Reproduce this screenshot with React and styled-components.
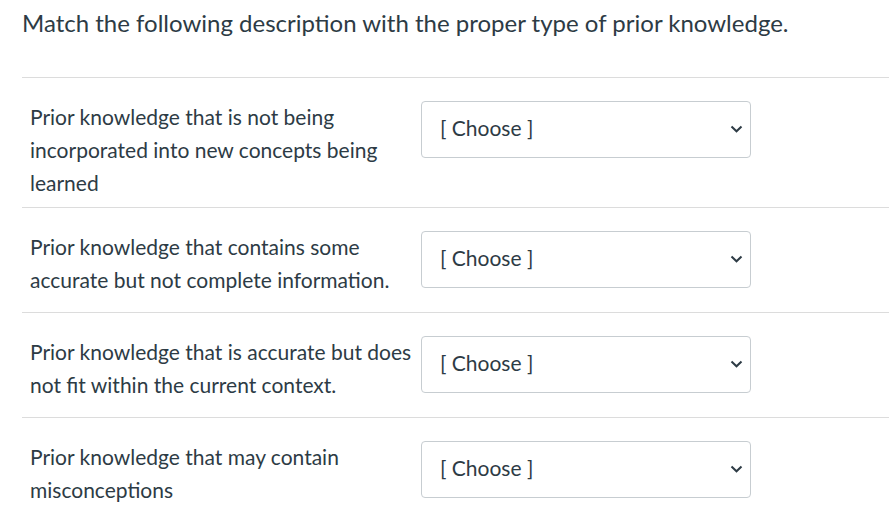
import React from "react";
import styled, { createGlobalStyle } from "styled-components";

const Global = createGlobalStyle`
  html, body {
    margin: 0;
    padding: 0;
    background: #ffffff;
  }
  body {
    font-family: Lato, "Open Sans", sans-serif;
    color: #2D3B45;
  }
`;

const Page = styled.div`
  width: 889px;
  height: 526px;
  overflow: hidden;
  padding-left: 22px;
  box-sizing: border-box;
`;

const Title = styled.h1`
  margin: 0;
  padding-top: 5px;
  font-size: 24px;
  font-weight: 400;
  line-height: 36px;
  height: 72px;
  white-space: nowrap;
`;

const List = styled.div`
  width: 900px;
`;

const Row = styled.div`
  display: flex;
  align-items: flex-start;
  border-top: 1px solid #dcdcdc;
`;

const Answer = styled.div`
  width: 391px;
  padding: 22px 0 8px 8px;
  font-size: 21px;
  line-height: 33px;
`;

const SelectWrap = styled.div`
  position: relative;
  padding: 23px 0 24px 0;
`;

const Select = styled.select`
  appearance: none;
  -webkit-appearance: none;
  width: 330px;
  height: 57px;
  box-sizing: border-box;
  border: 1px solid #c7cdd1;
  border-radius: 4px;
  background: #ffffff;
  color: #2D3B45;
  font-family: Lato, "Open Sans", sans-serif;
  font-size: 21px;
  padding: 0 40px 4px 18px;
  outline: none;
`;

const Chevron = styled.svg`
  position: absolute;
  right: 8px;
  top: 47px;
  width: 13px;
  height: 8px;
  pointer-events: none;
`;

const rows = [
  "Prior knowledge that is not being incorporated into new concepts being learned",
  "Prior knowledge that contains some accurate but not complete information.",
  "Prior knowledge that is accurate but does not fit within the current context.",
  "Prior knowledge that may contain misconceptions",
];

export default function App() {
  return (
    <Page>
      <Global />
      <Title>Match the following description with the proper type of prior knowledge.</Title>
      <List>
        {rows.map((text, i) => (
          <Row key={i}>
            <Answer>{text}</Answer>
            <SelectWrap>
              <Select defaultValue="">
                <option value="">[ Choose ]</option>
              </Select>
              <Chevron viewBox="0 0 13 8">
                <path d="M1.5 1.5 L6.5 6.3 L11.5 1.5" fill="none" stroke="#2D3B45" strokeWidth="2" />
              </Chevron>
            </SelectWrap>
          </Row>
        ))}
      </List>
    </Page>
  );
}
